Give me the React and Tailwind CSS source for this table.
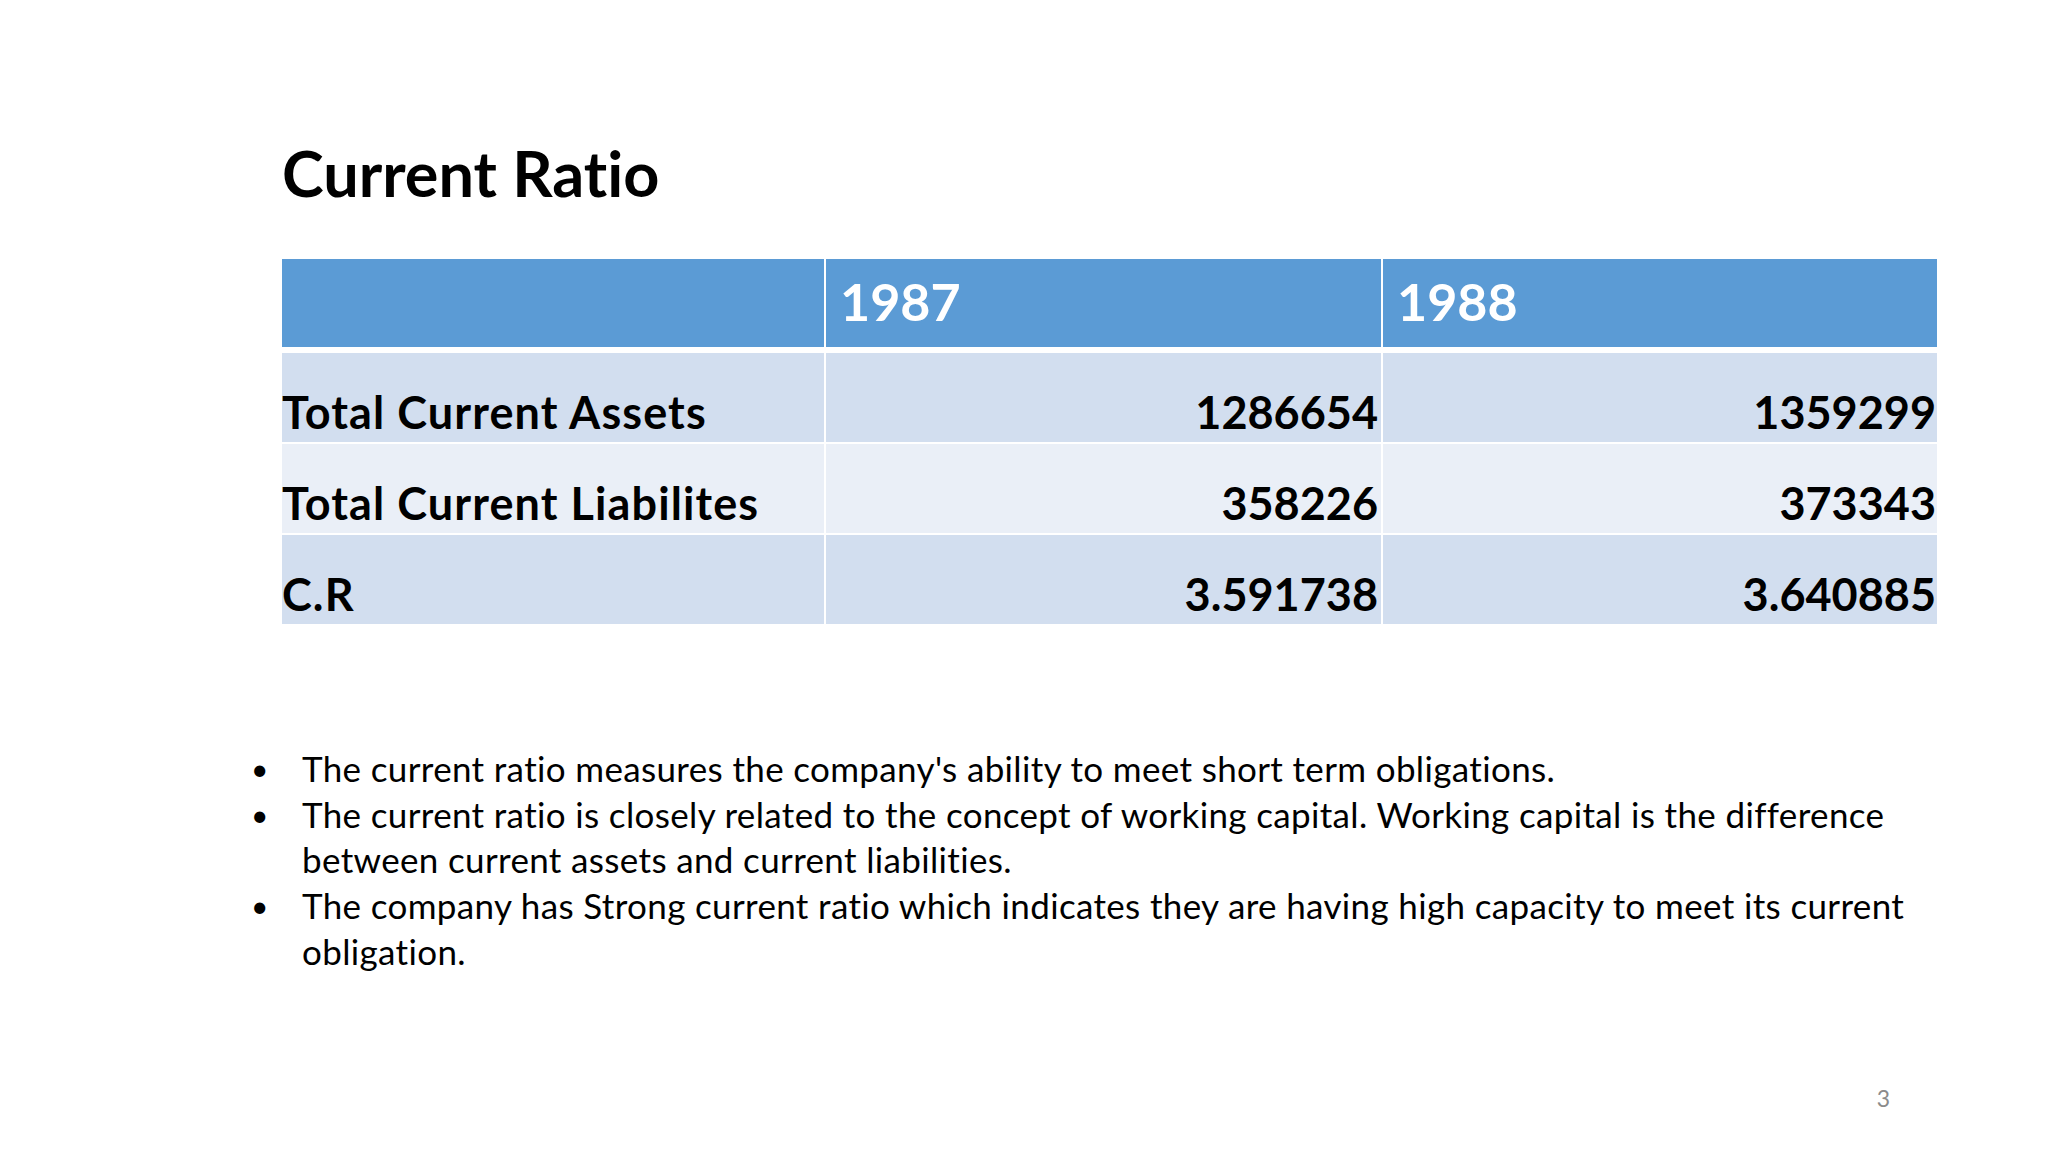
import React from "react";

const rows = [
  { label: "Total Current Assets", a: "1286654", b: "1359299", bg: "bg-[#D2DEEF]" },
  { label: "Total Current Liabilites", a: "358226", b: "373343", bg: "bg-[#EAEFF7]" },
  { label: "C.R", a: "3.591738", b: "3.640885", bg: "bg-[#D2DEEF]" },
];

const bullets = [
  ["The current ratio measures the company's ability to meet short term obligations."],
  [
    "The current ratio is closely related to the concept of working capital. Working capital is the difference",
    "between current assets and current liabilities.",
  ],
  [
    "The company has Strong current ratio which indicates they are having high capacity to meet its current",
    "obligation.",
  ],
];

export default function App() {
  return (
    <div
      className="w-[2048px] h-[1152px] bg-white flex flex-col text-black overflow-hidden [font-variant-ligatures:none]"
      style={{ fontFamily: "Lato, 'Open Sans', sans-serif" }}
    >
      <div className="pl-[282px] mt-[141px] h-[63px] text-[63px] leading-[63px] font-bold whitespace-nowrap">
        Current Ratio
      </div>

      <div className="ml-[282px] mt-[55px] w-[1655px] flex flex-col">
        <div className="grid grid-cols-[542px_555px_554px] gap-x-[2px] h-[88px]">
          <div className="bg-[#5B9BD5]" />
          <div className="bg-[#5B9BD5] pl-[14px] pt-[16px] text-[52px] leading-[53px] font-bold text-white">1987</div>
          <div className="bg-[#5B9BD5] pl-[14px] pt-[16px] text-[52px] leading-[53px] font-bold text-white">1988</div>
        </div>
        <div className="flex flex-col gap-y-[2px] mt-[6px]">
          {rows.map((r) => (
            <div key={r.label} className="grid grid-cols-[542px_555px_554px] gap-x-[2px] h-[89px]">
              <div className={`${r.bg} flex items-end pb-[7px] text-[45px] leading-[45px] tracking-[1.1px] font-bold whitespace-nowrap`}>
                {r.label}
              </div>
              <div className={`${r.bg} flex items-end justify-end pr-[3px] pb-[7px] text-[45px] leading-[45px] font-bold`}>
                {r.a}
              </div>
              <div className={`${r.bg} flex items-end justify-end pr-[1px] pb-[7px] text-[45px] leading-[45px] font-bold`}>
                {r.b}
              </div>
            </div>
          ))}
        </div>
      </div>

      <div className="ml-[251px] mt-[122px] flex flex-col text-[35px] leading-[45.7px] tracking-[0.35px]">
        {bullets.map((lines, i) => (
          <div key={i} className="flex">
            <div className="w-[51px] shrink-0 text-[30px]">•</div>
            <div className="flex flex-col whitespace-nowrap">
              {lines.map((l) => (
                <span key={l}>{l}</span>
              ))}
            </div>
          </div>
        ))}
      </div>

      <div className="mt-auto mb-[42px] flex justify-end pr-[158px] text-[23px] leading-[23px] text-[#8B8B8B]">
        3
      </div>
    </div>
  );
}
